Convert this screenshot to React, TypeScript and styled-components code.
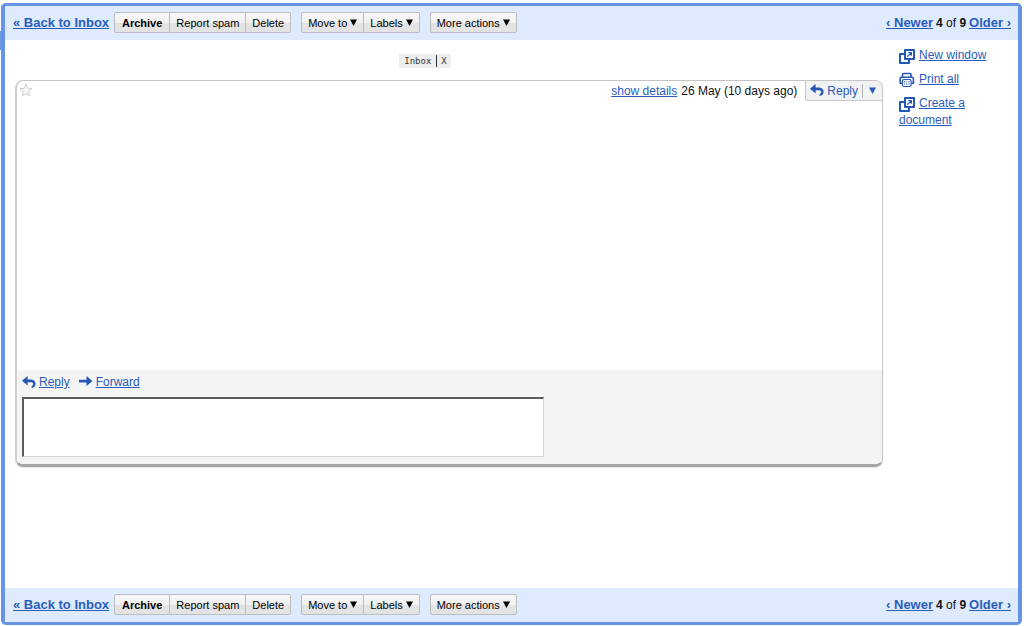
import React from "react";
import styled, { createGlobalStyle } from "styled-components";

const GlobalStyle = createGlobalStyle`
  *, *::before, *::after { box-sizing: border-box; }
  body {
    margin: 0;
    background: #fff;
    color: #111;
    font: 12px/16px "Liberation Sans", Arial, sans-serif;
  }
`;

const Page = styled.div`
  position: relative;
  display: flex;
  min-height: 100vh;
  padding: 3px 2px 1px 1px;
`;

const LabelTab = styled.span`
  position: absolute;
  left: 0;
  top: 31px;
  width: 2px;
  height: 19px;
  background: #6c96e6;
`;

const Frame = styled.div`
  flex: 1;
  display: flex;
  flex-direction: column;
  border: 4px solid #6793e4;
  border-width: 3px 4px;
  border-radius: 5px;
  background: #fff;
`;

const Bar = styled.div`
  display: flex;
  align-items: center;
  height: 34px;
  padding: 0 7px 1px 8px;
  background: #deebfe;
`;

const Link = styled.a<{ $bold?: boolean }>`
  color: #2a5dbb;
  font-size: ${(p) => (p.$bold ? "13px" : "12px")};
  font-weight: ${(p) => (p.$bold ? "bold" : "normal")};
  text-decoration: underline;
`;

const BackLink = styled(Link)`
  width: 101px;
  white-space: nowrap;
`;

const Group = styled.div`
  display: flex;
  margin-right: 10px;
`;

const Button = styled.button<{ $strong?: boolean }>`
  display: flex;
  align-items: center;
  gap: 3px;
  height: 21px;
  margin: 0;
  padding: 0 ${(p) => (p.$strong ? "7px" : "6px")};
  border: 1px solid #bcbdbf;
  background: linear-gradient(#f8f8f8 0%, #f1f1f1 50%, #e3e3e3 55%, #e3e3e3 100%);
  color: #000;
  font-family: inherit;
  font-size: 11px;
  font-weight: ${(p) => (p.$strong ? "bold" : "normal")};
  white-space: nowrap;

  & + & { border-left: 0; }
  &:first-child { border-radius: 2px 0 0 2px; }
  &:last-child { border-radius: 0 2px 2px 0; }
  &:only-child { border-radius: 2px; }
`;

const Pager = styled.div`
  display: flex;
  gap: 3px;
  margin-left: auto;
  white-space: nowrap;
`;

const Main = styled.main`
  flex: 1;
  display: flex;
  align-items: flex-start;
  padding: 0 7px 0 10px;
`;

const Thread = styled.section`
  flex: 1;
  min-width: 0;
`;

const Subject = styled.div`
  display: flex;
  justify-content: center;
  padding: 14px 48px 12px 0;
`;

const Chip = styled.span`
  display: flex;
  align-items: center;
  height: 14px;
  padding-left: 5px;
  background: #eeeeee;
  color: #333;
  font: 9px/14px "DejaVu Sans Mono", monospace;
`;

const ChipRemove = styled.button`
  height: 12px;
  margin-left: 5px;
  padding: 0 4px;
  border: 0;
  border-left: 1px solid #333;
  background: none;
  color: inherit;
  font: inherit;
  line-height: 12px;
`;

const Card = styled.article`
  overflow: hidden;
  border: 1px solid #c4c4c4;
  border-left: 2px solid #cfcfcf;
  border-bottom: 3px solid #a5a5a5;
  border-radius: 8px;
  box-shadow: 0 1px 1px #e6e6e6;
`;

const CardHeader = styled.header`
  display: flex;
  align-items: flex-start;
  padding-left: 2px;
`;

const StarButton = styled.button`
  display: flex;
  margin: 2px auto 0 0;
  padding: 0;
  border: 0;
  background: none;
`;

const Details = styled.span`
  display: flex;
  gap: 4px;
  margin: 2px 8px 0 0;
  white-space: nowrap;
`;

const ReplyMenu = styled.div`
  display: flex;
  align-items: center;
  height: 20px;
  border: 1px solid #c9c9c9;
  border-width: 0 0 1px 1px;
  border-radius: 0 0 0 3px;
  background: #f1f2f4;
`;

const ReplyButton = styled.button`
  display: flex;
  align-items: center;
  height: 14px;
  gap: 3px;
  padding: 0 4px;
  border: 0;
  background: none;
  color: #2a5dbb;
  font: inherit;

  & + & {
    padding: 0 6px;
    border-left: 1px solid #b5b5b5;
  }
`;

const Body = styled.div`
  height: 269px;
`;

const CardFooter = styled.footer`
  padding: 4px 5px 7px;
  background: #f4f4f4;
`;

const FooterActions = styled.div`
  display: flex;
  align-items: center;
  gap: 9px;
  height: 16px;
  margin-bottom: 7px;
`;

const IconLink = styled.span`
  display: flex;
  align-items: center;
  gap: 3px;
`;

const ReplyBox = styled.textarea`
  display: block;
  width: 61%;
  height: 60px;
  padding: 4px;
  border: 1px solid #d8d6d0;
  border-top: 2px solid #5c5c5c;
  border-left: 2px solid #5c5c5c;
  background: #fff;
  font: inherit;
  resize: none;
  outline: 0;
`;

const Side = styled.aside`
  width: 128px;
  padding: 7px 16px 0 16px;
`;

const SideItem = styled.div`
  margin-bottom: 7px;

  svg {
    margin-right: 4px;
    vertical-align: -5px;
  }
`;

const BLUE = "#2558b3";

function ReplyIcon() {
  return (
    <svg width="14" height="13" viewBox="0 0 14 13" aria-hidden="true">
      <path d="M0 4.8 L5.6 0 V3.5 H8.5 C11.8 3.5 13.6 5.2 13.6 7.8 C13.6 10.4 12 11.8 9.6 12 V9.9 C10.8 9.6 11.2 9 11.2 8 C11.2 6.8 10.4 6.2 8.5 6.2 H5.6 V9.6 Z" fill={BLUE} />
    </svg>
  );
}

function ForwardIcon() {
  return (
    <svg width="14" height="12" viewBox="0 0 14 12" aria-hidden="true">
      <path d="M0 3.8 H7.5 V0 L13.5 5 L7.5 10 V6.4 H0 Z" fill={BLUE} />
    </svg>
  );
}

function WindowIcon() {
  return (
    <svg width="16" height="16" viewBox="0 0 16 16" fill="#fff" stroke={BLUE} strokeWidth="2" strokeLinejoin="round" aria-hidden="true">
      <rect x="1" y="6" width="9" height="9" />
      <rect x="6" y="2" width="9" height="9" />
      <path d="M8.3 8.7 L12 5 M9.3 4.6 H12.4 V7.7" fill="none" strokeWidth="1.2" />
    </svg>
  );
}

function PrinterIcon() {
  return (
    <svg width="16" height="16" viewBox="0 0 16 16" fill="none" stroke={BLUE} aria-hidden="true">
      <path d="M3.5 5 V2.5 Q3.5 1.5 4.5 1.5 H11 Q12 1.5 12 2.5 V5" strokeWidth="1.6" />
      <path d="M3 11.3 H1.2 V6.5 Q1.2 5.2 2.5 5.2 H13 Q14.4 5.2 14.4 6.5 V11.3 H12.6" strokeWidth="1.6" />
      <rect x="3.5" y="7.5" width="8.6" height="7" rx="1.5" fill="#fff" strokeWidth="1.2" />
      <path d="M5 9.8 H11 M5 12 H11" strokeDasharray="1.2 1" strokeWidth="1" />
    </svg>
  );
}

function Star() {
  return (
    <svg width="14" height="15" viewBox="0 0 14 15" aria-hidden="true">
      <path d="M7 1.3 L8.6 5.3 L13 5.6 L9.7 8.5 L10.8 13 L7 10.6 L3.2 13 L4.3 8.5 L1 5.6 L5.4 5.3 Z" fill="#f8f8f8" stroke="#cfcfcf" />
    </svg>
  );
}

function Arrow({ color = "#000" }: { color?: string }) {
  return (
    <svg width="7" height="7" viewBox="0 0 7 7" aria-hidden="true">
      <path d="M0 0.5 H7 L3.5 7 Z" fill={color} />
    </svg>
  );
}

function Toolbar() {
  return (
    <Bar>
      <BackLink $bold href="#inbox">« Back to Inbox</BackLink>
      <Group>
        <Button $strong>Archive</Button>
        <Button>Report spam</Button>
        <Button>Delete</Button>
      </Group>
      <Group>
        <Button>Move to <Arrow /></Button>
        <Button>Labels <Arrow /></Button>
      </Group>
      <Group>
        <Button>More actions <Arrow /></Button>
      </Group>
      <Pager>
        <Link $bold href="#newer">‹ Newer</Link>
        <span><b>4</b> of <b>9</b></span>
        <Link $bold href="#older">Older ›</Link>
      </Pager>
    </Bar>
  );
}

export default function App() {
  return (
    <>
      <GlobalStyle />
      <Page>
        <Frame>
          <Toolbar />
          <Main>
            <Thread>
              <Subject>
                <Chip>
                  Inbox
                  <ChipRemove aria-label="Remove label Inbox">X</ChipRemove>
                </Chip>
              </Subject>
              <Card>
                <CardHeader>
                  <StarButton aria-label="Star"><Star /></StarButton>
                  <Details>
                    <Link href="#details">show details</Link>
                    <span>26 May (10 days ago)</span>
                  </Details>
                  <ReplyMenu>
                    <ReplyButton><ReplyIcon />Reply</ReplyButton>
                    <ReplyButton aria-label="More reply options"><Arrow color={BLUE} /></ReplyButton>
                  </ReplyMenu>
                </CardHeader>
                <Body />
                <CardFooter>
                  <FooterActions>
                    <IconLink><ReplyIcon /><Link href="#reply">Reply</Link></IconLink>
                    <IconLink><ForwardIcon /><Link href="#forward">Forward</Link></IconLink>
                  </FooterActions>
                  <ReplyBox aria-label="Reply message" />
                </CardFooter>
              </Card>
            </Thread>
            <Side>
              <SideItem><WindowIcon /><Link href="#window">New window</Link></SideItem>
              <SideItem><PrinterIcon /><Link href="#print">Print all</Link></SideItem>
              <SideItem><WindowIcon /><Link href="#document">Create a document</Link></SideItem>
            </Side>
          </Main>
          <Toolbar />
        </Frame>
        <LabelTab />
      </Page>
    </>
  );
}
